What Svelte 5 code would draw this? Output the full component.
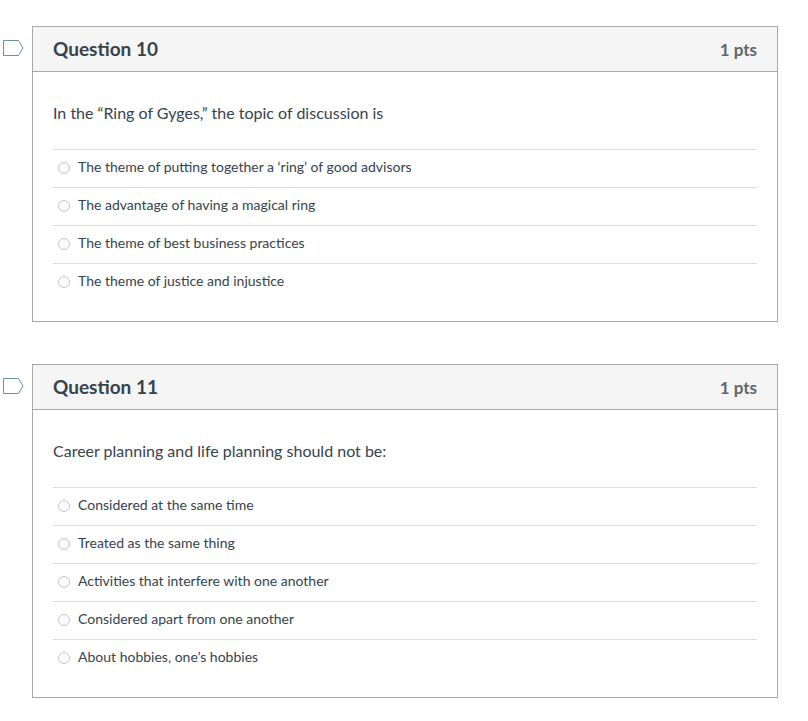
<script>
  const questions = [
    {
      id: 10,
      text: 'In the “Ring of Gyges,” the topic of discussion is',
      answers: [
        'The theme of putting together a ‘ring’ of good advisors',
        'The advantage of having a magical ring',
        'The theme of best business practices',
        'The theme of justice and injustice'
      ]
    },
    {
      id: 11,
      text: 'Career planning and life planning should not be:',
      answers: [
        'Considered at the same time',
        'Treated as the same thing',
        'Activities that interfere with one another',
        'Considered apart from one another',
        'About hobbies, one’s hobbies'
      ]
    }
  ];
</script>

<main class="page">
  {#each questions as q}
    <div class="row">
      <svg class="flag" width="21" height="16" viewBox="0 0 21 16" aria-hidden="true">
        <path d="M0.5 0.5H15.5L20 8L15.5 15.5H0.5Z" fill="#fff" stroke="#6b90aa" stroke-width="1" />
      </svg>
      <section class="card">
        <header class="head">
          <h2>Question {q.id}</h2>
          <span class="pts">1 pts</span>
        </header>
        <div class="body">
          <p class="text">{q.text}</p>
          <ul class="answers">
            {#each q.answers as a}
              <li>
                <span class="radio"></span>
                <span class="label">{a}</span>
              </li>
            {/each}
          </ul>
        </div>
      </section>
    </div>
  {/each}
</main>

<style>
  :global(body) {
    background: #fff;
  }

  .page {
    display: flex;
    flex-direction: column;
    gap: 42px;
    width: 778px;
    padding-top: 26px;
    font-family: Lato, "Liberation Sans", sans-serif;
    color: #36434d;
  }

  .row {
    position: relative;
    padding-left: 32px;
  }

  .flag {
    position: absolute;
    left: 3px;
    top: 14px;
  }

  .card {
    border: 1px solid #a8a8a8;
  }

  .head {
    display: flex;
    justify-content: space-between;
    align-items: center;
    height: 44px;
    padding: 0 20px;
    background: #f5f5f5;
    border-bottom: 1px solid #a8a8a8;
  }

  h2 {
    margin: 0;
    font-size: 19px;
    font-weight: 700;
    line-height: 44px;
  }

  .pts {
    font-size: 17px;
    font-weight: 700;
    color: #5f666c;
  }

  .body {
    padding: 29px 20px 20px;
  }

  .text {
    margin: 0 0 24px;
    font-size: 16px;
    line-height: 24px;
  }

  .answers {
    margin: 0;
    padding: 0;
    list-style: none;
  }

  li {
    display: flex;
    align-items: flex-start;
    gap: 8px;
    box-sizing: border-box;
    height: 38px;
    padding: 7px 0 0 5px;
    border-top: 1px solid #dcdfe2;
    font-size: 14px;
    line-height: 20px;
  }

  .radio {
    box-sizing: border-box;
    width: 12px;
    height: 12px;
    margin-top: 5px;
    border: 1px solid #c8c8c8;
    border-radius: 50%;
    background: #fafafa;
  }
</style>
